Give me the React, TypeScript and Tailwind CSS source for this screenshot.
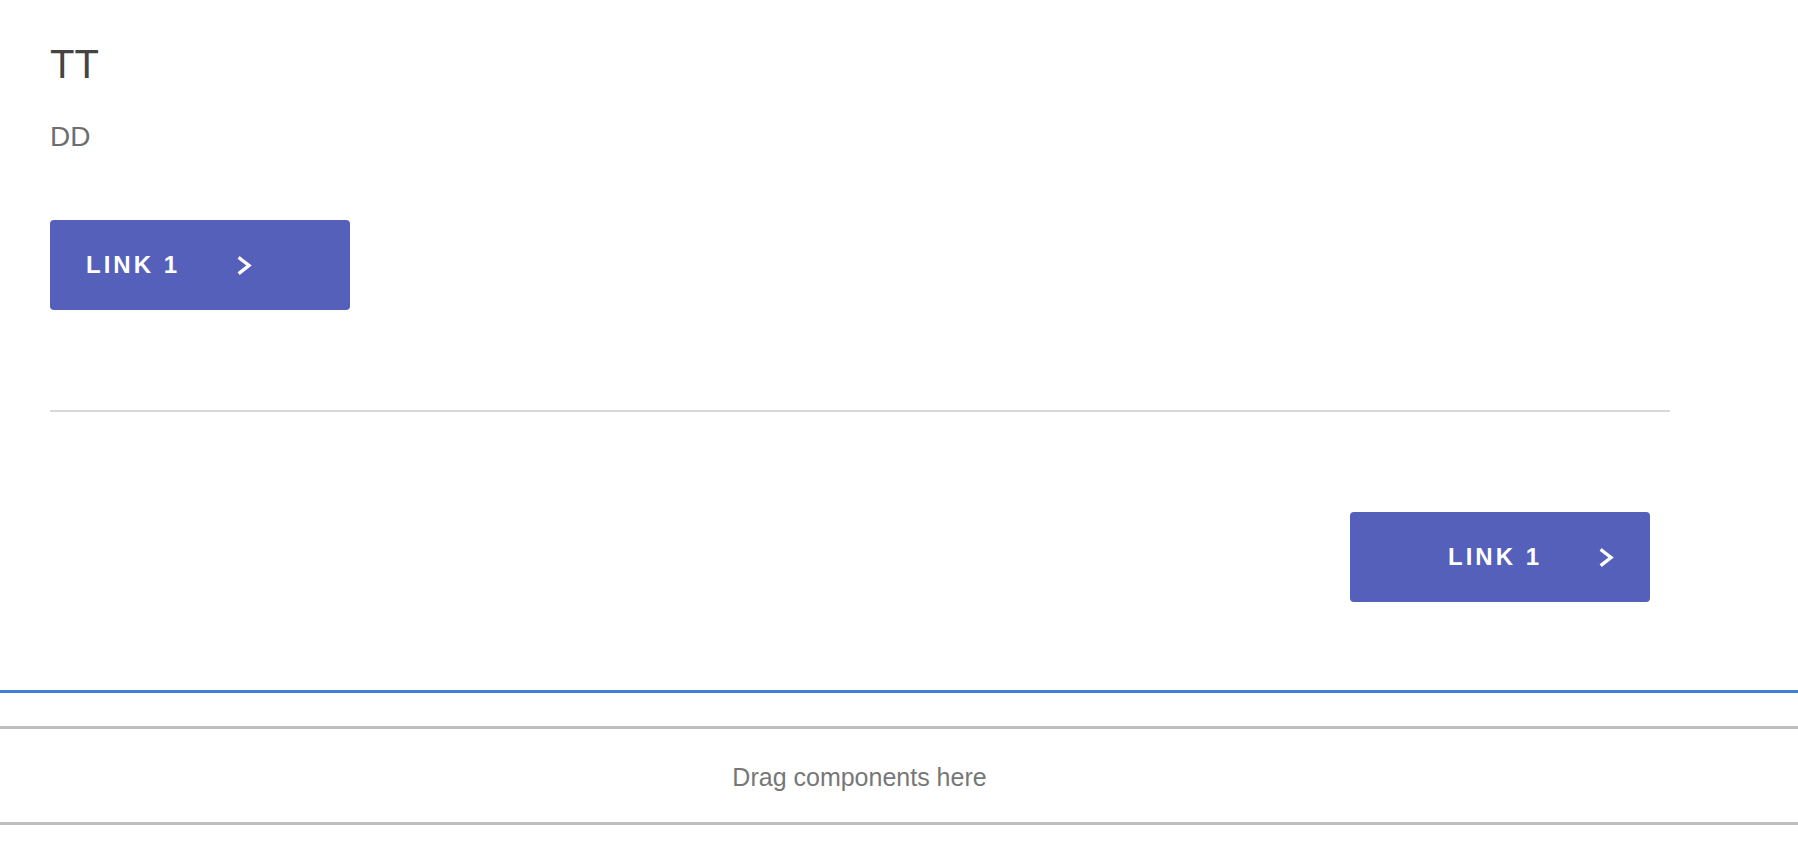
import React from "react";

function Chevron() {
  return (
    <svg width="15" height="19" viewBox="0 0 15 19" className="shrink-0">
      <polyline points="3,2.5 12,9.5 3,16.5" fill="none" stroke="#ffffff" strokeWidth="3.4" strokeLinecap="square" />
    </svg>
  );
}

function LinkButton({ align }: { align: "left" | "right" }) {
  return (
    <a
      href="#"
      className={
        align === "left"
          ? "flex items-center justify-start w-[300px] h-[90px] px-[36px] rounded-[4px] bg-[#5460b9]"
          : "flex items-center justify-end w-[300px] h-[90px] px-[36px] rounded-[4px] bg-[#5460b9]"
      }
    >
      <span className="text-[24px] leading-none font-bold tracking-[3px] text-white">LINK 1</span>
      <span className="ml-[57px] flex items-center">
        <Chevron />
      </span>
    </a>
  );
}

export default function App() {
  return (
    <main className="min-h-screen bg-white font-['Liberation_Sans',Arial,sans-serif]">
      {/* Teaser */}
      <section className="px-[50px] pt-[44px]">
        <h1 className="text-[40px] leading-none font-normal text-[#444444]">TT</h1>
        <p className="mt-[39px] text-[28px] leading-none text-[#6e6e6e]">DD</p>
        <div className="mt-[69px]">
          <LinkButton align="left" />
        </div>
      </section>

      {/* Separator */}
      <div className="pl-[50px] pr-[128px] pt-[100px]">
        <div className="h-[2px] bg-[#d9d9d9]" />
      </div>

      {/* Right aligned button */}
      <div className="flex justify-end pr-[148px] pt-[100px]">
        <LinkButton align="right" />
      </div>

      {/* Drop zone */}
      <div className="mt-[88px] h-[3px] bg-[#3f82d5]" />
      <div className="h-[33px]" />
      <div className="h-[3px] bg-[#bfbfbf]" />
      <div className="h-[93px] flex items-center justify-center pr-[79px] pt-[4px]">
        <span className="text-[25px] leading-none text-[#777777]">Drag components here</span>
      </div>
      <div className="h-[3px] bg-[#bfbfbf]" />
    </main>
  );
}
